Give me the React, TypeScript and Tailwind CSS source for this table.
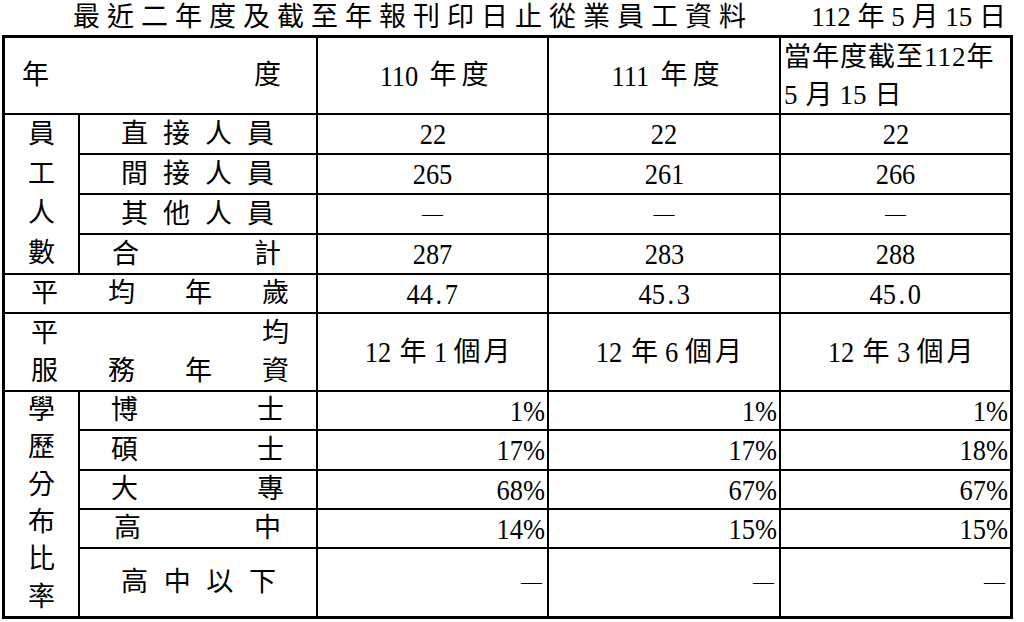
import React from "react";

const FONT = "font-['Liberation_Serif','Noto_Sans_CJK_TC',serif]";

function Spread({ chars, cls }: { chars: string[]; cls: string }) {
  return (
    <div className={`bg-white flex items-center justify-between ${cls}`}>
      {chars.map((c, i) => (
        <span key={i}>{c}</span>
      ))}
    </div>
  );
}

function Num({ children, right = false }: { children: React.ReactNode; right?: boolean }) {
  return (
    <span className={`inline-block text-[30px] scale-x-[0.88] ${right ? "origin-right" : "origin-center"}`}>
      {children}
    </span>
  );
}

function Center({ children, cls = "" }: { children: React.ReactNode; cls?: string }) {
  return <div className={`bg-white flex items-center justify-center ${cls}`}>{children}</div>;
}

function Right({ children, cls = "" }: { children: React.ReactNode; cls?: string }) {
  return <div className={`bg-white flex items-center justify-end ${cls}`}>{children}</div>;
}

function Dash() {
  return <span className="text-[21px]">—</span>;
}

function Dec({ a, b }: { a: string; b: string }) {
  return (
    <Num>
      {a}
      <span className="px-[3px]">.</span>
      {b}
    </Num>
  );
}

function Tenure({ m }: { m: string }) {
  return (
    <Center>
      <span className="flex items-center ml-[8px]">
        <Num>12</Num>
        <span className="ml-[7px] mr-[6px]">年</span>
        <Num>{m}</Num>
        <span className="ml-[6px] mr-[3px]">個</span>
        <span>月</span>
      </span>
    </Center>
  );
}

export default function App() {
  return (
    <div className={`w-[1024px] h-[622px] bg-white text-black text-[27px] leading-none ${FONT}`}>
      <div className="h-[35px] flex items-center">
        <div className="pl-[73px] tracking-[7px]">最近二年度及截至年報刊印日止從業員工資料</div>
        <div className="ml-auto pr-[18px] whitespace-pre">112 年 5 月 15 日</div>
      </div>
      <div className="ml-[2px] w-[1011px] border-[3px] border-black bg-black grid gap-[2px] grid-cols-[73px_236px_229px_230px_229px] grid-rows-[75px_38px_38px_38px_38px_37px_76px_37px_38px_37px_37px_67px]">
        {/* header */}
        <Spread chars={["年", "度"]} cls="col-span-2 pl-[17px] pr-[35px]" />
        <Center>
          <span className="flex items-center">
            <Num>110</Num>
            <span className="ml-[9px] mr-[5px]">年</span>
            <span>度</span>
          </span>
        </Center>
        <Center>
          <span className="flex items-center">
            <Num>111</Num>
            <span className="ml-[9px] mr-[5px]">年</span>
            <span>度</span>
          </span>
        </Center>
        <div className="bg-white flex flex-col justify-center pl-[3px] leading-[38px]">
          <div className="tracking-[1px] whitespace-nowrap">當年度截至112年</div>
          <div className="whitespace-nowrap">
            5<span className="ml-[8px] mr-[7px]">月</span>15<span className="ml-[8px]">日</span>
          </div>
        </div>

        {/* 員工人數 */}
        <div className="row-span-4 bg-white flex flex-col justify-around items-center">
          <span>員</span>
          <span>工</span>
          <span>人</span>
          <span>數</span>
        </div>
        <Spread chars={["直", "接", "人", "員"]} cls="pl-[41px] pr-[42px]" />
        <Center><Num>22</Num></Center>
        <Center><Num>22</Num></Center>
        <Center><Num>22</Num></Center>

        <Spread chars={["間", "接", "人", "員"]} cls="pl-[41px] pr-[42px]" />
        <Center><Num>265</Num></Center>
        <Center><Num>261</Num></Center>
        <Center><Num>266</Num></Center>

        <Spread chars={["其", "他", "人", "員"]} cls="pl-[41px] pr-[42px]" />
        <Center><Dash /></Center>
        <Center><Dash /></Center>
        <Center><Dash /></Center>

        <Spread chars={["合", "計"]} cls="pl-[32px] pr-[35px]" />
        <Center><Num>287</Num></Center>
        <Center><Num>283</Num></Center>
        <Center><Num>288</Num></Center>

        {/* 平均年歲 */}
        <Spread chars={["平", "均", "年", "歲"]} cls="col-span-2 pl-[26px] pr-[27px]" />
        <Center><Dec a="44" b="7" /></Center>
        <Center><Dec a="45" b="3" /></Center>
        <Center><Dec a="45" b="0" /></Center>

        {/* 平均服務年資 */}
        <div className="col-span-2 bg-white flex flex-col justify-center pl-[26px] pr-[27px] gap-[11px]">
          <div className="flex justify-between">
            <span>平</span>
            <span>均</span>
          </div>
          <div className="flex justify-between">
            <span>服</span>
            <span>務</span>
            <span>年</span>
            <span>資</span>
          </div>
        </div>
        <Tenure m="1" />
        <Tenure m="6" />
        <Tenure m="3" />

        {/* 學歷分布比率 */}
        <div className="row-span-5 bg-white flex flex-col justify-around items-center">
          <span>學</span>
          <span>歷</span>
          <span>分</span>
          <span>布</span>
          <span>比</span>
          <span>率</span>
        </div>
        <Spread chars={["博", "士"]} cls="pl-[31px] pr-[32px]" />
        <Right cls="pr-[2px]"><Num right>1%</Num></Right>
        <Right cls="pr-[2px]"><Num right>1%</Num></Right>
        <Right cls="pr-[2px]"><Num right>1%</Num></Right>

        <Spread chars={["碩", "士"]} cls="pl-[31px] pr-[32px]" />
        <Right cls="pr-[2px]"><Num right>17%</Num></Right>
        <Right cls="pr-[2px]"><Num right>17%</Num></Right>
        <Right cls="pr-[2px]"><Num right>18%</Num></Right>

        <Spread chars={["大", "專"]} cls="pl-[31px] pr-[32px]" />
        <Right cls="pr-[2px]"><Num right>68%</Num></Right>
        <Right cls="pr-[2px]"><Num right>67%</Num></Right>
        <Right cls="pr-[2px]"><Num right>67%</Num></Right>

        <Spread chars={["高", "中"]} cls="pl-[34px] pr-[35px]" />
        <Right cls="pr-[2px]"><Num right>14%</Num></Right>
        <Right cls="pr-[2px]"><Num right>15%</Num></Right>
        <Right cls="pr-[2px]"><Num right>15%</Num></Right>

        <Spread chars={["高", "中", "以", "下"]} cls="pl-[41px] pr-[40px]" />
        <Right cls="pr-[5px]"><Dash /></Right>
        <Right cls="pr-[5px]"><Dash /></Right>
        <Right cls="pr-[5px]"><Dash /></Right>
      </div>
    </div>
  );
}
